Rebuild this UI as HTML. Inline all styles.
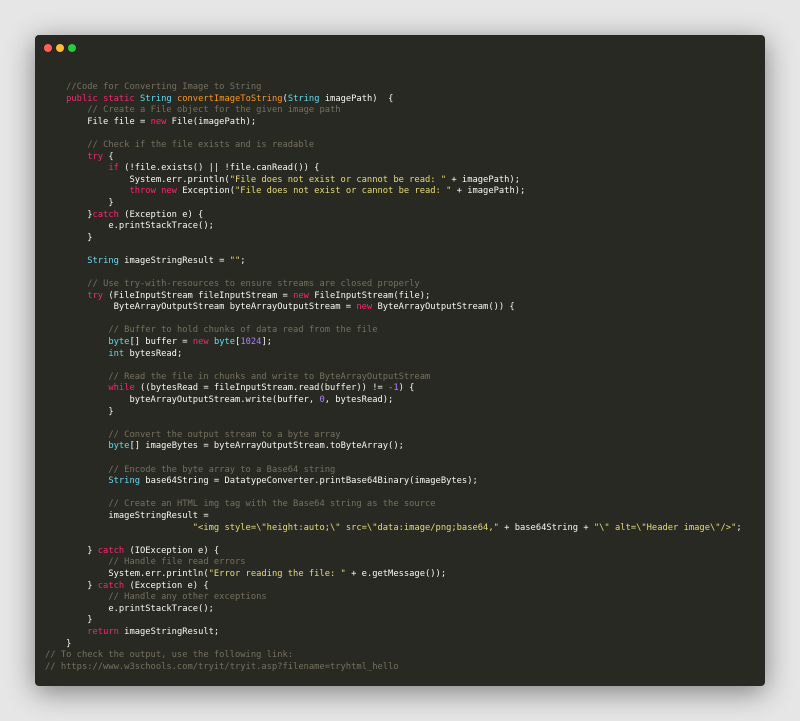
<!DOCTYPE html>
<html><head><meta charset="utf-8"><style>
html,body{margin:0;padding:0;width:800px;height:721px;background:#e6e6e6;overflow:hidden}
.win{position:absolute;left:35px;top:35px;width:730px;height:651px;background:#282923;border-radius:4px;box-shadow:0 6px 28px rgba(0,0,0,.45)}
.d{position:absolute;top:9px;width:8px;height:8px;border-radius:50%}
pre{position:absolute;left:10px;top:47px;margin:0;font-family:"DejaVu Sans Mono","Liberation Mono",monospace;font-size:8.78px;line-height:11.6px;color:#f8f8f2;white-space:pre}
.c{color:#75715e}.k{color:#f92672}.t{color:#66d9ef}.f{color:#fd971f}.s{color:#e6db74}.n{color:#ae81ff}
</style></head><body><div class="win">
<div class="d" style="left:9px;background:#ff5f56"></div><div class="d" style="left:21px;background:#ffbd2e"></div><div class="d" style="left:33px;background:#27c93f"></div>
<pre>    <span class="c">//Code for Converting Image to String</span>
    <span class="k">public static</span> <span class="t">String</span> <span class="f">convertImageToString</span>(<span class="t">String</span> imagePath)  {
        <span class="c">// Create a File object for the given image path</span>
        File file = <span class="k">new</span> File(imagePath);

        <span class="c">// Check if the file exists and is readable</span>
        <span class="k">try</span> {
            <span class="k">if</span> (!file.exists() || !file.canRead()) {
                System.err.println(<span class="s">"File does not exist or cannot be read: "</span> + imagePath);
                <span class="k">throw new</span> Exception(<span class="s">"File does not exist or cannot be read: "</span> + imagePath);
            }
        }<span class="k">catch</span> (Exception e) {
            e.printStackTrace();
        }

        <span class="t">String</span> imageStringResult = <span class="s">""</span>;

        <span class="c">// Use try-with-resources to ensure streams are closed properly</span>
        <span class="k">try</span> (FileInputStream fileInputStream = <span class="k">new</span> FileInputStream(file);
             ByteArrayOutputStream byteArrayOutputStream = <span class="k">new</span> ByteArrayOutputStream()) {

            <span class="c">// Buffer to hold chunks of data read from the file</span>
            <span class="t">byte</span>[] buffer = <span class="k">new</span> <span class="t">byte</span>[<span class="n">1024</span>];
            <span class="t">int</span> bytesRead;

            <span class="c">// Read the file in chunks and write to ByteArrayOutputStream</span>
            <span class="k">while</span> ((bytesRead = fileInputStream.read(buffer)) != <span class="n">-1</span>) {
                byteArrayOutputStream.write(buffer, <span class="n">0</span>, bytesRead);
            }

            <span class="c">// Convert the output stream to a byte array</span>
            <span class="t">byte</span>[] imageBytes = byteArrayOutputStream.toByteArray();

            <span class="c">// Encode the byte array to a Base64 string</span>
            <span class="t">String</span> base64String = DatatypeConverter.printBase64Binary(imageBytes);

            <span class="c">// Create an HTML img tag with the Base64 string as the source</span>
            imageStringResult =
                            <span class="s">"&lt;img style=\"height:auto;\" src=\"data:image/png;base64,"</span> + base64String + <span class="s">"\" alt=\"Header image\"/&gt;"</span>;

        } <span class="k">catch</span> (IOException e) {
            <span class="c">// Handle file read errors</span>
            System.err.println(<span class="s">"Error reading the file: "</span> + e.getMessage());
        } <span class="k">catch</span> (Exception e) {
            <span class="c">// Handle any other exceptions</span>
            e.printStackTrace();
        }
        <span class="k">return</span> imageStringResult;
    }
<span class="c">// To check the output, use the following link:</span>
<span class="c">// https://www.w3schools.com/tryit/tryit.asp?filename=tryhtml_hello</span></pre>
</div></body></html>
